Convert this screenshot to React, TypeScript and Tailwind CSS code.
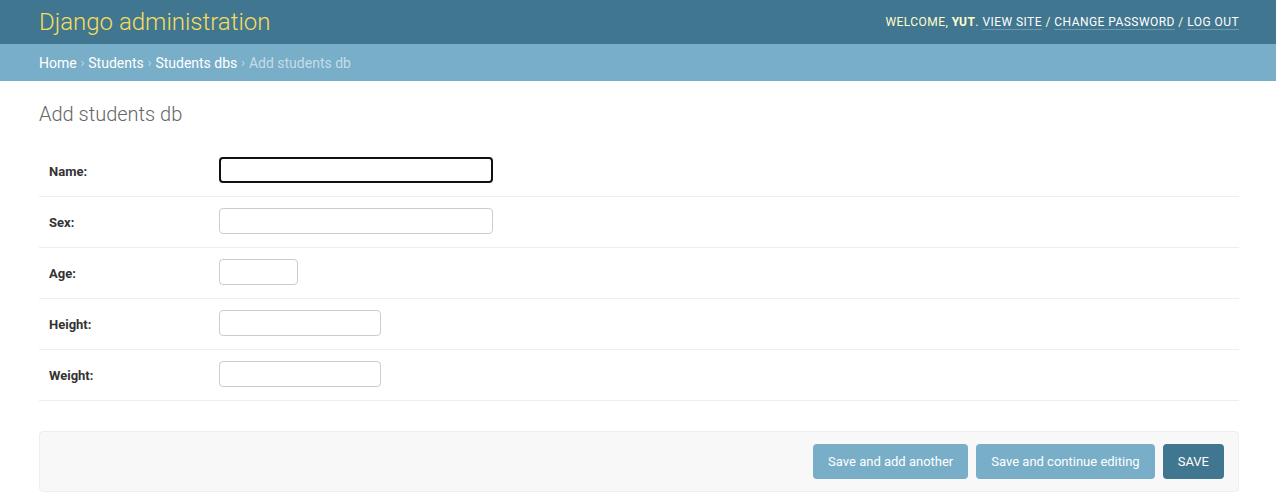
import React from "react";

type Field = {
  label: string;
  width: string;
  focused?: boolean;
};

const FIELDS: Field[] = [
  { label: "Name", width: "w-[274px]", focused: true },
  { label: "Sex", width: "w-[274px]" },
  { label: "Age", width: "w-[79px]" },
  { label: "Height", width: "w-[162px]" },
  { label: "Weight", width: "w-[162px]" },
];

function Header() {
  return (
    <div className="flex h-[44px] items-center justify-between bg-[#417690] pl-[39px] pr-[37px]">
      <h1 className="text-[24px] font-light leading-none text-[#f5dd5d]">
        Django administration
      </h1>
      <div className="text-[12px] uppercase tracking-[0.45px] text-[#ffc]">
        Welcome, <strong className="font-bold">YUT</strong>.{" "}
        <a className="border-b border-white/25 text-white">View site</a> /{" "}
        <a className="border-b border-white/25 text-white">Change password</a> /{" "}
        <a className="border-b border-white/25 text-white">Log out</a>
      </div>
    </div>
  );
}

function Breadcrumbs() {
  return (
    <div className="flex h-[37px] items-center bg-[#79aec8] pl-[39px] pr-[37px] pt-[1px] text-[14px] text-[#c4dce8]">
      <a className="text-white">Home</a>
      <span className="mx-[4px] text-[12px]">›</span>
      <a className="text-white">Students</a>
      <span className="mx-[4px] text-[12px]">›</span>
      <a className="text-white">Students dbs</a>
      <span className="mx-[4px] text-[12px]">›</span>
      <span>Add students db</span>
    </div>
  );
}

export default function App() {
  return (
    <div className="min-h-[499px] bg-white font-['Roboto','Liberation_Sans',sans-serif] text-[13px] text-[#333]">
      <Header />
      <Breadcrumbs />

      <div className="pl-[39px] pr-[37px] pt-[21px]">
        <h1 className="mb-[20px] text-[20px] font-light leading-[24px] text-[#666]">
          Add students db
        </h1>

        {/* Fieldset */}
        <div>
          {FIELDS.map((f) => (
            <div
              key={f.label}
              className="flex h-[51px] items-center border-b border-[#eee] px-[10px]"
            >
              <label className="w-[170px] pt-[2px] font-bold text-[#333]">{f.label}:</label>
              <input
                type="text"
                className={`${f.width} mb-[3px] h-[26px] rounded-[4px] bg-white outline-none ${
                  f.focused
                    ? "border-2 border-[#111]"
                    : "border border-[#ccc]"
                }`}
              />
            </div>
          ))}
        </div>

        {/* Submit row */}
        <div className="mt-[30px] flex justify-end gap-[8px] rounded-[4px] border border-[#eee] bg-[#f8f8f8] px-[14px] py-[12px]">
          <button className="h-[35px] rounded-[4px] bg-[#79aec8] px-[15px] text-[13px] text-white">
            Save and add another
          </button>
          <button className="h-[35px] rounded-[4px] bg-[#79aec8] px-[15px] text-[13px] text-white">
            Save and continue editing
          </button>
          <button className="h-[35px] rounded-[4px] bg-[#417690] px-[15px] text-[13px] uppercase text-white">
            Save
          </button>
        </div>
      </div>
    </div>
  );
}
